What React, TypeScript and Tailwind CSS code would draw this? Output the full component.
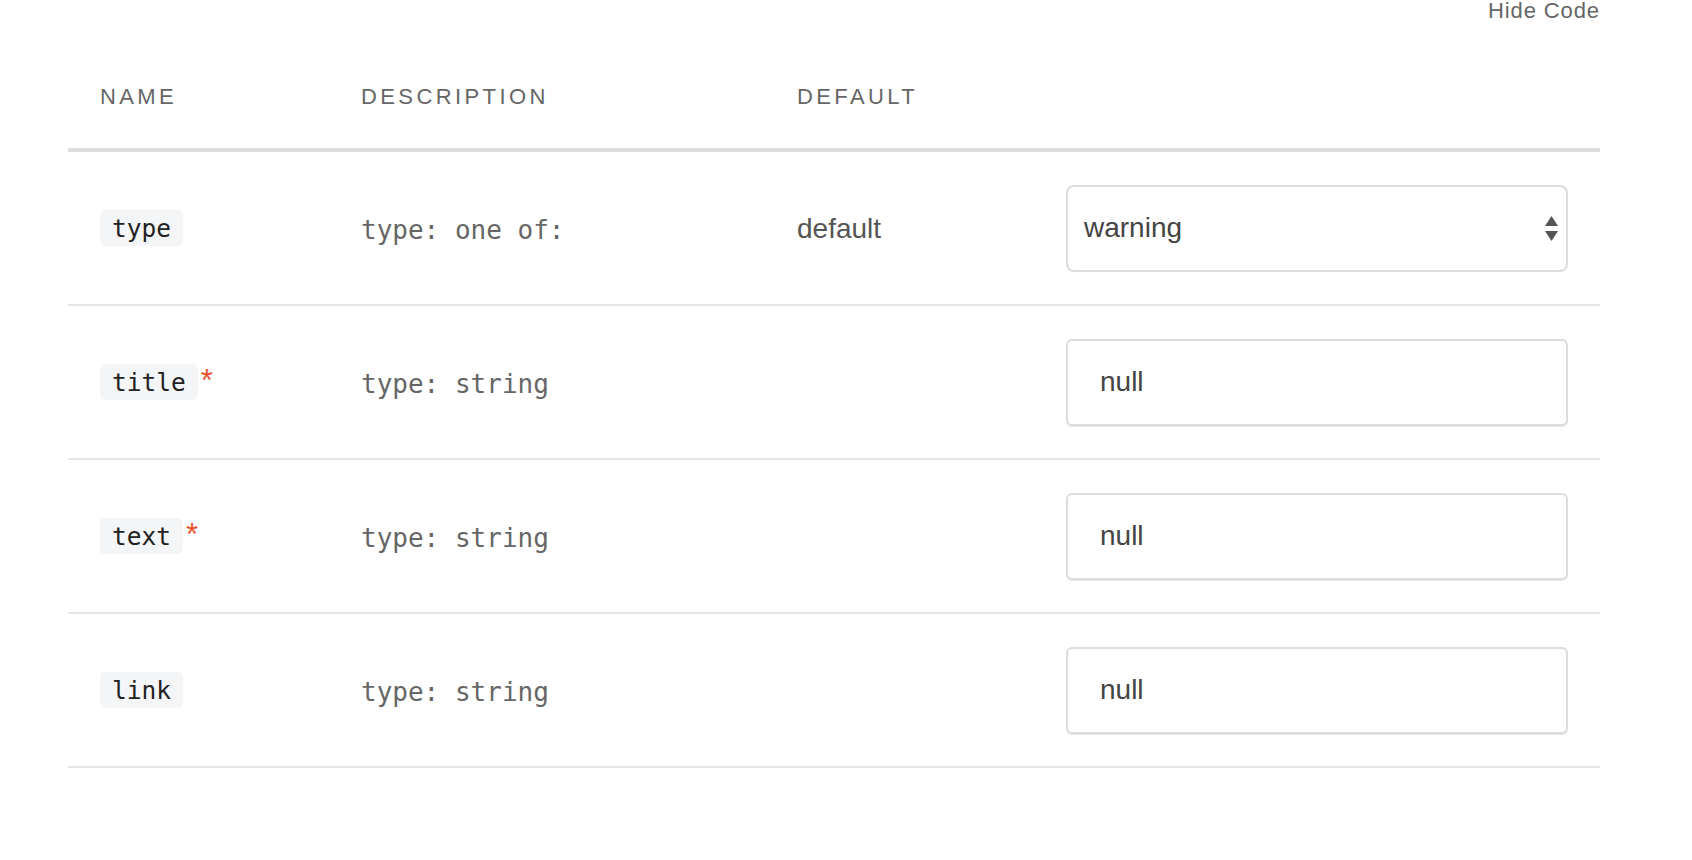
import React from "react";

const mono = "font-['DejaVu_Sans_Mono','Liberation_Mono',monospace]";
const sans = "font-['Liberation_Sans',Arial,sans-serif]";

type Row = { name: string; required?: boolean; desc: string; def?: string; kind: "select" | "input"; value: string };

const rows: Row[] = [
  { name: "type", desc: "type: one of:", def: "default", kind: "select", value: "warning" },
  { name: "title", required: true, desc: "type: string", kind: "input", value: "null" },
  { name: "text", required: true, desc: "type: string", kind: "input", value: "null" },
  { name: "link", desc: "type: string", kind: "input", value: "null" },
];

function Arrows() {
  return (
    <svg width="13" height="25" viewBox="0 0 13 25" className="block">
      <polygon points="0,10 6.5,0 13,10" fill="#555" />
      <polygon points="0,15 13,15 6.5,25" fill="#555" />
    </svg>
  );
}

export default function App() {
  return (
    <div className={`w-[1692px] h-[860px] bg-white ${sans}`}>
      <div className="ml-[68px] w-[1532px]">
        <div className="h-[22px] text-right text-[22px] leading-[22px] tracking-[0.9px] text-[#666]">Hide Code</div>
        <div className="flex h-[130px] border-b-4 border-[#dddddd] pt-[64px] text-[22px] leading-[22px] tracking-[3.4px] text-[#666] uppercase">
          <div className="w-[261px] px-8">Name</div>
          <div className="w-[436px] px-8">Description</div>
          <div className="w-[269px] px-8">Default</div>
          <div className="flex-1 px-8" />
        </div>
        {rows.map((r) => (
          <div key={r.name} className="flex h-[154px] items-center border-b-2 border-[#e4e4e4]">
            <div className="w-[261px] px-8">
              <div className="flex items-start">
                <span className={`${mono} h-[36px] rounded-[5px] bg-[#f4f5f7] px-[12px] pt-[1px] text-[24.5px] leading-[36px] text-[#222]`}>
                  {r.name}
                </span>
                {r.required && (
                  <span className="ml-[3px] mt-[1px] text-[31px] leading-none text-[#e8532d]">*</span>
                )}
              </div>
            </div>
            <div className={`w-[436px] px-8 pt-[3px] ${mono} text-[26px] leading-[36px] text-[#666]`}>{r.desc}</div>
            <div className="w-[269px] px-8 pt-[1px] text-[28px] leading-[36px] text-[#555]">{r.def ?? ""}</div>
            <div className="flex-1 px-8">
              {r.kind === "select" ? (
                <div className="flex h-[87px] items-center justify-between rounded-[8px] border-2 border-[#dcdcdc] pl-[16px] pr-[8px] text-[28px] text-[#444]">
                  <span>{r.value}</span>
                  <Arrows />
                </div>
              ) : (
                <div className="flex h-[87px] items-center rounded-[6px] border-2 border-[#dcdcdc] pl-[32px] text-[28px] text-[#444] shadow-[0_1px_0_#dde7ec]">
                  {r.value}
                </div>
              )}
            </div>
          </div>
        ))}
      </div>
    </div>
  );
}
